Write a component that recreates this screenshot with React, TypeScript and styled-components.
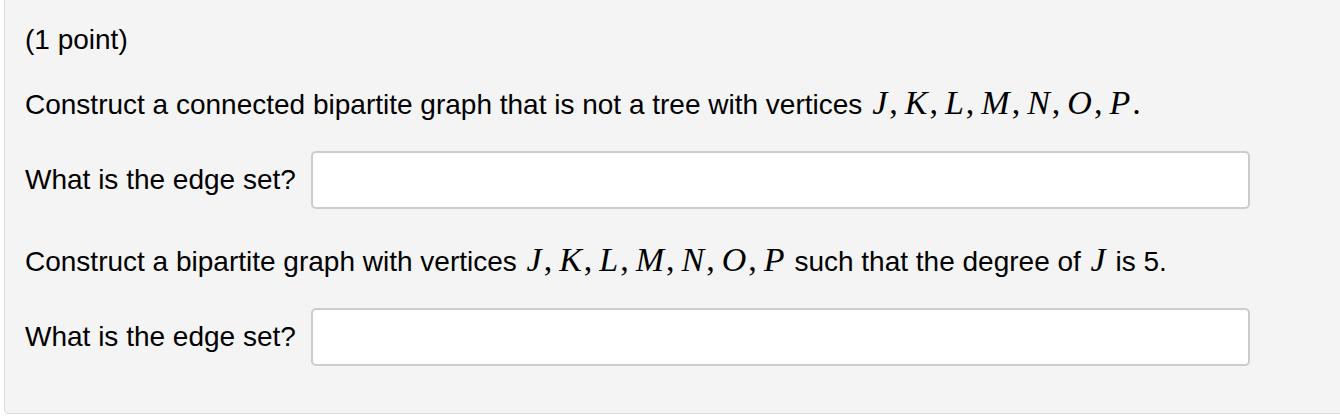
import React from "react";
import styled, { createGlobalStyle } from "styled-components";

const Global = createGlobalStyle`
  html, body { margin: 0; padding: 0; background: #ffffff; overflow: hidden; }
  body { font-family: "Liberation Sans", Arial, Helvetica, sans-serif; color: #000; }
`;

const Card = styled.div`
  box-sizing: border-box;
  margin: -20px 0 0 4px;
  width: 1360px;
  height: 434px;
  padding: 43px 20px 0 20px;
  background: #f4f4f4;
  border: 1px solid #dcdcdc;
  border-radius: 4px;
  display: flex;
  flex-direction: column;
`;

const Para = styled.p<{ $gap: number }>`
  margin: 0 0 ${(p) => p.$gap}px 0;
  font-size: 28px;
  line-height: 32px;
  height: 32px;
  white-space: nowrap;
`;

const Row = styled.div<{ $gap: number }>`
  display: flex;
  align-items: center;
  gap: 15px;
  margin-bottom: ${(p) => p.$gap}px;
  font-size: 28px;
`;

const Label = styled.span`
  white-space: nowrap;
`;

const Field = styled.input`
  box-sizing: border-box;
  flex: none;
  width: 939px;
  height: 58px;
  background: #ffffff;
  border: 2px solid #cccccc;
  border-radius: 5px;
  outline: none;
`;

const MathV = styled.span`
  font-family: "Liberation Serif", "Times New Roman", serif;
  font-style: italic;
  font-size: 34px;
  padding: 0 2px;
`;

const Comma = styled.span`
  font-family: "Liberation Serif", "Times New Roman", serif;
  font-size: 34px;
  margin-right: 5px;
`;

const Vertices = ({ last }: { last?: boolean }) => {
  const vs = ["J", "K", "L", "M", "N", "O", "P"];
  return (
    <>
      {vs.map((v, i) => (
        <React.Fragment key={v}>
          <MathV>{v}</MathV>
          {i < vs.length - 1 && <Comma>,</Comma>}
        </React.Fragment>
      ))}
      {last && <Comma>.</Comma>}
    </>
  );
};

export default function App() {
  return (
    <>
      <Global />
      <Card>
        <Para $gap={31}>(1 point)</Para>
        <Para $gap={32}>
          Construct a connected bipartite graph that is not a tree with vertices <Vertices last />
        </Para>
        <Row $gap={35}>
          <Label>What is the edge set?</Label>
          <Field type="text" />
        </Row>
        <Para $gap={32}>
          Construct a bipartite graph with vertices <Vertices /> such that the degree of <MathV>J</MathV> is 5.
        </Para>
        <Row $gap={0}>
          <Label>What is the edge set?</Label>
          <Field type="text" />
        </Row>
      </Card>
    </>
  );
}
